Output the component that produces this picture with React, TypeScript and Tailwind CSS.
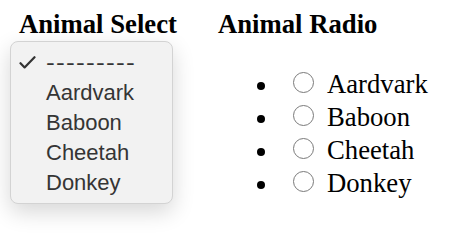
const animals = ["Aardvark", "Baboon", "Cheetah", "Donkey"];

function Check() {
  return (
    <svg width="17" height="13" viewBox="0 0 17 13" className="absolute left-[8px] top-[8px]">
      <path d="M1.5 7.2 L5.6 11.4 L15.5 1.2" fill="none" stroke="#333" strokeWidth="2.2" strokeLinecap="round" strokeLinejoin="round" />
    </svg>
  );
}

function SelectMenu() {
  return (
    <div className="w-[163px] h-[163px] mt-[1px] rounded-[8px] border border-[#d3d3d3] bg-[#f2f2f2] py-[6px] shadow-[0_8px_22px_rgba(0,0,0,0.16)] font-['Liberation_Sans',Arial,sans-serif] text-[22px] text-[#353535]">
      <div className="relative h-[30px] leading-[30px] pl-[35px]">
        <Check />
        <span className="inline-block origin-left scale-x-[1.2] tracking-[1px]">---------</span>
      </div>
      {animals.map((a) => (
        <div key={a} className="h-[30px] leading-[30px] pl-[35px]">
          {a}
        </div>
      ))}
    </div>
  );
}

function RadioList() {
  return (
    <ul className="mt-[28px]">
      {animals.map((a) => (
        <li key={a} className="flex h-[33px] items-start">
          <span className="ml-[39px] mt-[14px] h-[8px] w-[8px] rounded-full bg-black" />
          <span className="ml-[28px] mt-[4px] h-[21px] w-[21px] rounded-full border-[1.5px] border-[#7a7a7a] bg-white" />
          <span className="ml-[13px] leading-[33px]">{a}</span>
        </li>
      ))}
    </ul>
  );
}

export default function App() {
  return (
    <div className="flex min-h-[233px] w-[474px] bg-white font-['Liberation_Serif','Times_New_Roman',serif] text-[26.7px] text-black">
      <div className="ml-[10px] w-[208px]">
        <h4 className="mt-[9px] ml-[9px] font-bold leading-[31px]">Animal Select</h4>
        <SelectMenu />
      </div>
      <div>
        <h4 className="mt-[9px] font-bold leading-[31px]">Animal Radio</h4>
        <RadioList />
      </div>
    </div>
  );
}
